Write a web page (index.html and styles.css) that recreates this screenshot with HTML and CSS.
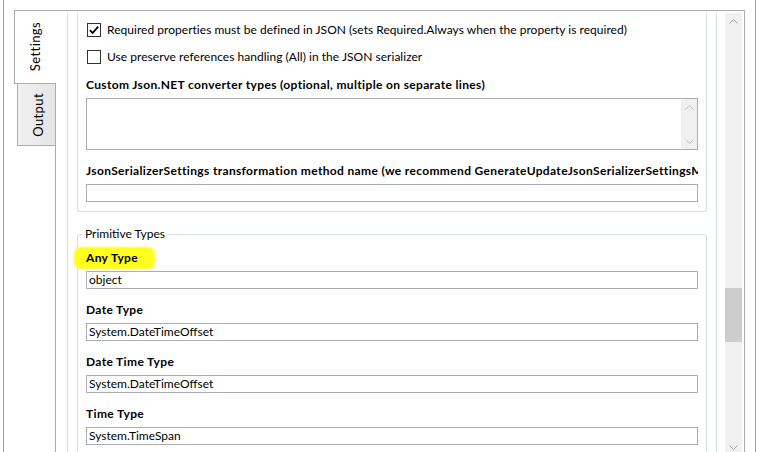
FILE: index.html
```html
<!DOCTYPE html>
<html>
<head>
<meta charset="utf-8">
<link rel="stylesheet" href="styles.css">
</head>
<body>
<div class="window">
  <div class="tabcontrol">
    <div class="tabstrip">
      <div class="tab tab-selected"><span class="tab-label">Settings</span></div>
      <div class="tab tab-normal"><span class="tab-label">Output</span></div>
      <div class="tab-filler"></div>
    </div>
    <div class="tabpanel">
      <div class="viewport">
        <div class="panel">
          <div class="group group-top">
            <div class="check-row">
              <span class="checkbox"><svg width="12" height="12" viewBox="0 0 12 12"><polyline points="1.8,6.2 4.6,9 10.2,2.6" fill="none" stroke="#000" stroke-width="1.8"/></svg></span>
              <span class="check-text">Required properties must be defined in JSON (sets Required.Always when the property is required)</span>
            </div>
            <div class="check-row">
              <span class="checkbox"></span>
              <span class="check-text">Use preserve references handling (All) in the JSON serializer</span>
            </div>
            <div class="field-label">Custom Json.NET converter types (optional, multiple on separate lines)</div>
            <div class="textarea">
              <div class="ta-scroll">
                <span class="arrow"><svg width="9" height="5" viewBox="0 0 9 5"><polyline points="0.5,4.5 4.5,0.5 8.5,4.5" fill="none" stroke="#c6c6c6" stroke-width="1"/></svg></span>
                <span class="arrow"><svg width="9" height="5" viewBox="0 0 9 5"><polyline points="0.5,0.5 4.5,4.5 8.5,0.5" fill="none" stroke="#c6c6c6" stroke-width="1"/></svg></span>
              </div>
            </div>
            <div class="field-label">JsonSerializerSettings transformation method name (we recommend GenerateUpdateJsonSerializerSettingsMethod)</div>
            <div class="input"></div>
          </div>
          <fieldset class="group group-box">
            <legend>Primitive Types</legend>
            <div class="field-label first"><span class="highlight">Any Type</span></div>
            <div class="input">object</div>
            <div class="field-label">Date Type</div>
            <div class="input">System.DateTimeOffset</div>
            <div class="field-label">Date Time Type</div>
            <div class="input">System.DateTimeOffset</div>
            <div class="field-label">Time Type</div>
            <div class="input">System.TimeSpan</div>
          </fieldset>
        </div>
      </div>
      <div class="vscroll">
        <span class="arrow main-arrow"><svg width="9" height="5" viewBox="0 0 9 5"><polyline points="0.5,4.5 4.5,0.5 8.5,4.5" fill="none" stroke="#a6a6a6" stroke-width="1"/></svg></span>
        <div class="track"><div class="thumb"></div></div>
        <span class="arrow main-arrow"><svg width="9" height="5" viewBox="0 0 9 5"><polyline points="0.5,0.5 4.5,4.5 8.5,0.5" fill="none" stroke="#a6a6a6" stroke-width="1"/></svg></span>
      </div>
    </div>
  </div>
</div>
</body>
</html>
```
FILE: styles.css
```css
* { box-sizing: border-box; }
html, body {
  margin: 0;
  padding: 0;
  background: #ffffff;
}
body {
  width: 759px;
  height: 452px;
  overflow: hidden;
  font-family: "Lato", "Open Sans", sans-serif;
  font-size: 12px;
  color: #000;
}
.window {
  margin-left: 3px;
  width: 753px;
  height: 452px;
  border-left: 1px solid #a0a0a0;
  border-right: 1px solid #a0a0a0;
  padding: 10px 0 0 10px;
}
.tabcontrol {
  display: flex;
  width: 731px;
  height: 450px;
}
.tabstrip {
  width: 42px;
  display: flex;
  flex-direction: column;
  flex-shrink: 0;
}
.tab {
  display: flex;
  align-items: center;
  justify-content: center;
}
.tab-label {
  writing-mode: vertical-rl;
  transform: rotate(180deg);
  line-height: 16px;
  font-size: 13px;
  letter-spacing: 0.4px;
  white-space: nowrap;
}
.tab-selected {
  height: 74px;
  width: 42px;
  background: #fff;
  border: 1px solid #acacac;
  border-right: none;
  padding-right: 1px;
}
.tab-normal {
  margin-left: 3px;
  width: 39px;
  height: 62px;
  background: linear-gradient(to right, #f0f0f0, #e5e5e5);
  border: 1px solid #acacac;
  border-top: none;
  padding-left: 2px;
}
.tab-filler {
  flex: 1;
  border-right: 1px solid #acacac;
}
.tabpanel {
  flex: 1;
  min-width: 0;
  display: flex;
  border-top: 1px solid #acacac;
  border-right: 1px solid #acacac;
  border-bottom: 1px solid #acacac;
  padding: 2px 2px 3px 0;
  background: #fff;
}
.viewport {
  flex: 1;
  min-width: 0;
  overflow: hidden;
  padding: 0 8px 0 11px;
}
.panel {
  height: 100%;
  border-left: 1px solid #d5dfe5;
  border-right: 1px solid #d5dfe5;
  padding: 0 9px;
}
.group {
  border: 1px solid #d5dfe5;
  border-radius: 3px;
  padding: 0 8px 9px 8px;
  min-width: 0;
}
.group-top {
  border-top: none;
  border-top-left-radius: 0;
  border-top-right-radius: 0;
  padding-top: 9px;
}
.group-box {
  margin: 14px 0 0 0;
  padding: 0 8px 8px 8px;
}
.group-box legend {
  margin-left: -4px;
  padding: 0 3px;
  line-height: 16px;
  height: 16px;
}
.check-row {
  display: flex;
  align-items: center;
  height: 16px;
  padding-left: 1px;
}
.check-row + .check-row { margin-top: 11px; }
.checkbox {
  width: 14px;
  height: 14px;
  border: 1px solid #333333;
  background: #fff;
  display: flex;
  align-items: center;
  justify-content: center;
  margin-right: 6px;
  flex-shrink: 0;
}
.check-text {
  white-space: nowrap;
  line-height: 16px;
  letter-spacing: 0.03px;
}
.field-label {
  font-weight: bold;
  line-height: 16px;
  height: 16px;
  white-space: nowrap;
  overflow: hidden;
  margin-top: 13px;
  letter-spacing: 0.35px;
}
.check-row + .field-label { margin-top: 12px; }
.field-label.first { margin-top: 8px; overflow: visible; }
.textarea {
  margin-top: 5px;
  height: 52px;
  border: 1px solid #abadb3;
  display: flex;
  justify-content: flex-end;
}
.ta-scroll {
  width: 16px;
  background: #f0f0f0;
  display: flex;
  flex-direction: column;
  justify-content: space-between;
}
.arrow {
  display: flex;
  align-items: center;
  justify-content: center;
  height: 16px;
}
.input {
  margin-top: 5px;
  height: 18px;
  border: 1px solid #abadb3;
  padding: 0 2px;
  line-height: 16px;
  white-space: nowrap;
  overflow: hidden;
}
.highlight {
  display: inline-block;
  background: #ffff1e;
  padding: 0 14px 0 9px;
  margin-left: -9px;
  box-shadow: 0 0 2px 3px #ffff1e;
  border-radius: 4px;
}
.vscroll {
  width: 17px;
  flex-shrink: 0;
  background: #f0f0f0;
  display: flex;
  flex-direction: column;
}
.main-arrow { height: 17px; }
.track { flex: 1; }
.thumb {
  margin-top: 258px;
  height: 54px;
  background: #cdcdcd;
}
```
